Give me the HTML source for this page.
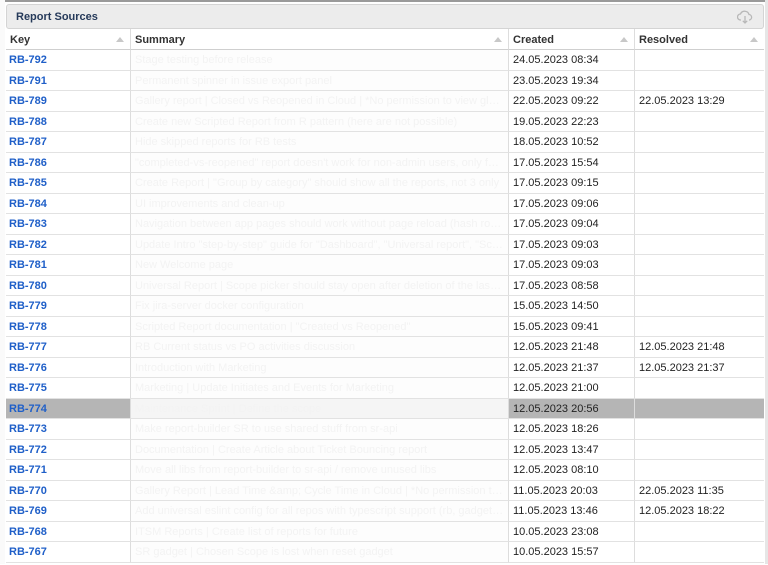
<!DOCTYPE html>
<html><head><meta charset="utf-8"><style>
*{margin:0;padding:0;box-sizing:border-box}
body{width:768px;height:564px;background:#fff;font-family:"Liberation Sans",Arial,sans-serif;font-size:11px;position:relative;overflow:hidden;color:#222}
.topline{position:absolute;left:0;top:0;width:768px;height:2px;background:#9a9a9a}
.rline{position:absolute;left:765px;top:0;width:3px;height:564px;background:#e6e6e6}
.lline{position:absolute;left:0;top:0;width:5px;height:564px;background:#fafafa}
.panel{position:absolute;left:6px;top:4px;width:758px;height:25px;background:#ececec;border:1px solid #d4d4d4;border-radius:3px}
.panel b{position:absolute;left:9px;top:6px;font-size:11px;color:#263a5a}
.hdr{position:absolute;top:29px;height:21px;background:#fff;border-bottom:1px solid #cfcfcf;font-weight:bold;color:#333;padding:5px 4px 0;font-size:11px}
.hdr i{position:absolute;right:6px;top:8px;width:0;height:0;border-left:4px solid transparent;border-right:4px solid transparent;border-bottom:5px solid #c8c8c8}
.row{position:absolute;left:6px;width:758px;height:20.5px}
.c{position:absolute;top:0;height:20.5px;border-bottom:1px solid #e2e2e2;padding:4px 4px;white-space:nowrap;overflow:hidden;text-overflow:ellipsis}
.k{left:0;width:125px;border-right:1px solid #ddd;color:#1f5fc8;font-weight:bold;padding-left:3px}
.s{left:125px;width:378px;border-right:1px solid #ddd;color:#f3f3f3;background:#fdfdfd}
.cr{left:503px;width:126px;border-right:1px solid #ddd}
.rs{left:629px;width:129px}
.sel .k,.sel .cr,.sel .rs{background:#b5b5b5}
.sel .s{background:#f5f5f5}
#rows{position:absolute;left:0;top:1px;width:768px;height:564px}
</style></head><body>
<div class="topline"></div><div class="lline"></div><div class="rline"></div>
<div class="panel"><b>Report Sources</b>
<svg style="position:absolute;right:10px;top:5px" width="16" height="14" viewBox="0 0 16 14"><path d="M4 10H3.5a3 3 0 0 1 0-6 4.5 4.5 0 0 1 8.5 0.5 2.8 2.8 0 0 1 0.5 5.5H12" fill="none" stroke="#b8b8b8" stroke-width="1.3"/><path d="M8 6v7M5.8 10.8L8 13l2.2-2.2" fill="none" stroke="#b8b8b8" stroke-width="1.3"/></svg></div>
<div class="hdr" style="left:6px;width:125px;border-right:1px solid #ddd">Key<i></i></div>
<div class="hdr" style="left:131px;width:378px;border-right:1px solid #ddd">Summary<i></i></div>
<div class="hdr" style="left:509px;width:126px;border-right:1px solid #ddd">Created<i></i></div>
<div class="hdr" style="left:635px;width:129px">Resolved<i></i></div>
<div id="rows">
<div class="row" style="top:49px"><div class="c k">RB-792</div><div class="c s">Stage testing before release</div><div class="c cr">24.05.2023 08:34</div><div class="c rs"></div></div>
<div class="row" style="top:69.5px"><div class="c k">RB-791</div><div class="c s">Permanent spinner in issue export panel</div><div class="c cr">23.05.2023 19:34</div><div class="c rs"></div></div>
<div class="row" style="top:90px"><div class="c k">RB-789</div><div class="c s">Gallery report | Closed vs Reopened in Cloud | *No permission to view global st...</div><div class="c cr">22.05.2023 09:22</div><div class="c rs">22.05.2023 13:29</div></div>
<div class="row" style="top:110.5px"><div class="c k">RB-788</div><div class="c s">Create new Scripted Report from R pattern (here are not possible)</div><div class="c cr">19.05.2023 22:23</div><div class="c rs"></div></div>
<div class="row" style="top:131px"><div class="c k">RB-787</div><div class="c s">Hide skipped reports for RB tests</div><div class="c cr">18.05.2023 10:52</div><div class="c rs"></div></div>
<div class="row" style="top:151.5px"><div class="c k">RB-786</div><div class="c s">"completed-vs-reopened" report doesn't work for non-admin users, only for ad...</div><div class="c cr">17.05.2023 15:54</div><div class="c rs"></div></div>
<div class="row" style="top:172px"><div class="c k">RB-785</div><div class="c s">Create Report | "Group by category" should show all the reports, not 3 only</div><div class="c cr">17.05.2023 09:15</div><div class="c rs"></div></div>
<div class="row" style="top:192.5px"><div class="c k">RB-784</div><div class="c s">UI improvements and clean-up</div><div class="c cr">17.05.2023 09:06</div><div class="c rs"></div></div>
<div class="row" style="top:213px"><div class="c k">RB-783</div><div class="c s">Navigation between app pages should work without page reload (hash router)</div><div class="c cr">17.05.2023 09:04</div><div class="c rs"></div></div>
<div class="row" style="top:233.5px"><div class="c k">RB-782</div><div class="c s">Update Intro "step-by-step" guide for "Dashboard", "Universal report", "Scripte...</div><div class="c cr">17.05.2023 09:03</div><div class="c rs"></div></div>
<div class="row" style="top:254px"><div class="c k">RB-781</div><div class="c s">New Welcome page</div><div class="c cr">17.05.2023 09:03</div><div class="c rs"></div></div>
<div class="row" style="top:274.5px"><div class="c k">RB-780</div><div class="c s">Universal Report | Scope picker should stay open after deletion of the last selec...</div><div class="c cr">17.05.2023 08:58</div><div class="c rs"></div></div>
<div class="row" style="top:295px"><div class="c k">RB-779</div><div class="c s">Fix jira-server docker configuration</div><div class="c cr">15.05.2023 14:50</div><div class="c rs"></div></div>
<div class="row" style="top:315.5px"><div class="c k">RB-778</div><div class="c s">Scripted Report documentation | "Created vs Reopened"</div><div class="c cr">15.05.2023 09:41</div><div class="c rs"></div></div>
<div class="row" style="top:336px"><div class="c k">RB-777</div><div class="c s">RB Current status vs PO activities discussion</div><div class="c cr">12.05.2023 21:48</div><div class="c rs">12.05.2023 21:48</div></div>
<div class="row" style="top:356.5px"><div class="c k">RB-776</div><div class="c s">Introduction with Marketing</div><div class="c cr">12.05.2023 21:37</div><div class="c rs">12.05.2023 21:37</div></div>
<div class="row" style="top:377px"><div class="c k">RB-775</div><div class="c s">Marketing | Update Initiates and Events for Marketing</div><div class="c cr">12.05.2023 21:00</div><div class="c rs"></div></div>
<div class="row sel" style="top:397.5px"><div class="c k">RB-774</div><div class="c s">Maintenance Sprint | Define the scope</div><div class="c cr">12.05.2023 20:56</div><div class="c rs"></div></div>
<div class="row" style="top:418px"><div class="c k">RB-773</div><div class="c s">Make report-builder SR to use shared stuff from sr-api</div><div class="c cr">12.05.2023 18:26</div><div class="c rs"></div></div>
<div class="row" style="top:438.5px"><div class="c k">RB-772</div><div class="c s">Documentation | Create Article about Ticket Bouncing report</div><div class="c cr">12.05.2023 13:47</div><div class="c rs"></div></div>
<div class="row" style="top:459px"><div class="c k">RB-771</div><div class="c s">Move all libs from report-builder to sr-api / remove unused libs</div><div class="c cr">12.05.2023 08:10</div><div class="c rs"></div></div>
<div class="row" style="top:479.5px"><div class="c k">RB-770</div><div class="c s">Gallery Report | Lead Time &amp;amp; Cycle Time in Cloud | *No permission to view ...</div><div class="c cr">11.05.2023 20:03</div><div class="c rs">22.05.2023 11:35</div></div>
<div class="row" style="top:500px"><div class="c k">RB-769</div><div class="c s">Add universal eslint config for all repos with typescript support (rb, gadgets, a...</div><div class="c cr">11.05.2023 13:46</div><div class="c rs">12.05.2023 18:22</div></div>
<div class="row" style="top:520.5px"><div class="c k">RB-768</div><div class="c s">ITSM Reports | Create list of reports for future</div><div class="c cr">10.05.2023 23:08</div><div class="c rs"></div></div>
<div class="row" style="top:541px"><div class="c k">RB-767</div><div class="c s">SR gadget | Chosen Scope is lost when reset gadget</div><div class="c cr">10.05.2023 15:57</div><div class="c rs"></div></div>
</div>
</body></html>
